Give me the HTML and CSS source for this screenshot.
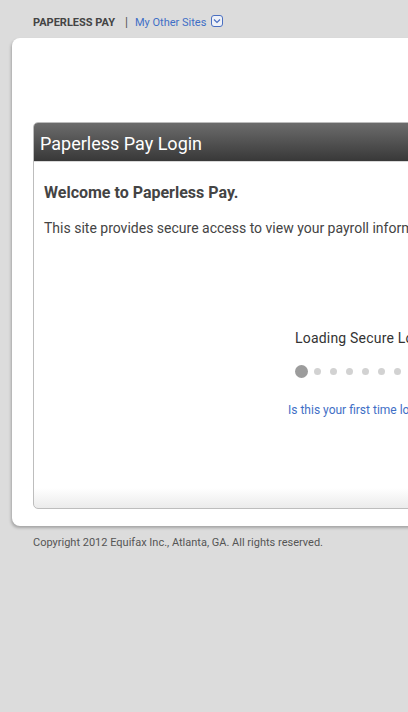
FILE: index.html
```html
<!DOCTYPE html>
<html>
<head>
<meta charset="utf-8">
<link rel="stylesheet" href="styles.css">
</head>
<body>
<div class="page">
  <div class="topbar">
    <span class="brand">PAPERLESS PAY</span>
    <span class="sep">|</span>
    <a class="sites" href="#">My Other Sites</a>
    <svg class="ddicon" width="12" height="12" viewBox="0 0 12 12">
      <rect x="0.5" y="0.5" width="11" height="11" rx="2.5" fill="#eef1f8" stroke="#4a6fc0"/>
      <path d="M3 4.5 L6 7.5 L9 4.5" fill="none" stroke="#4a6fc0" stroke-width="1.2"/>
    </svg>
  </div>
  <div class="card">
    <div class="panel">
      <div class="panel-head">Paperless Pay Login</div>
      <div class="panel-body">
        <h1 class="welcome">Welcome to Paperless Pay.</h1>
        <p class="intro">This site provides secure access to view your payroll information online.</p>
        <div class="loading">
          <div class="loading-text">Loading Secure Login...</div>
          <div class="dots">
            <span class="dot big"></span>
            <span class="dot"></span>
            <span class="dot"></span>
            <span class="dot"></span>
            <span class="dot"></span>
            <span class="dot"></span>
            <span class="dot"></span>
            <span class="dot"></span>
          </div>
          <a class="first" href="#">Is this your first time logging in?</a>
        </div>
      </div>
    </div>
  </div>
  <div class="copyright">Copyright 2012 Equifax Inc., Atlanta, GA. All rights reserved.</div>
</div>
</body>
</html>
```
FILE: styles.css
```css
html, body {
  margin: 0;
  padding: 0;
  background: #dcdcdc;
  font-family: Roboto, "Liberation Sans", Arial, sans-serif;
}
.page {
  width: 712px;
  padding: 0 0 0 12px;
}
.topbar {
  display: flex;
  align-items: center;
  height: 38px;
  padding: 6px 0 0 21px;
  font-size: 11px;
  box-sizing: border-box;
}
.brand {
  font-weight: bold;
  color: #444;
}
.sep {
  color: #555;
  margin: 0 7px 0 10px;
  font-size: 12px;
}
.sites {
  color: #3f6fc6;
  text-decoration: none;
  font-size: 11px;
}
.ddicon {
  margin-left: 5px;
  margin-top: -2px;
}
.card {
  background: #fff;
  border-radius: 8px;
  padding: 84px 21px 17px 21px;
  box-shadow: -1px 2px 3px rgba(0,0,0,0.25);
}
.panel {
  border: 1px solid #bdbdbd;
  border-radius: 5px;
  overflow: hidden;
  background: linear-gradient(to bottom, #fff 0, #fff 365px, #ebebeb 100%);
}
.panel-head {
  height: 38px;
  line-height: 41px;
  padding-left: 6px;
  color: #fff;
  font-size: 18px;
  background: linear-gradient(to bottom, #6c6c6c, #383838);
  border-bottom: 1px solid #d8d8d8;
}
.panel-body {
  padding: 21px 10px 0 10px;
  height: 346px;
  box-sizing: border-box;
}
.welcome {
  margin: 0;
  font-size: 16px;
  font-weight: bold;
  color: #444;
  line-height: 20px;
}
.intro {
  margin: 15px 0 0 0;
  font-size: 14px;
  color: #444;
  line-height: 20px;
  white-space: nowrap;
}
.loading {
  margin: 90px 0 0 244px;
  display: flex;
  flex-direction: column;
  align-items: flex-start;
}
.loading-text {
  font-size: 14px;
  color: #333;
  line-height: 20px;
  margin-left: 7px;
  letter-spacing: 0.2px;
}
.dots {
  display: flex;
  align-items: center;
  gap: 9px;
  margin: 17px 0 0 7px;
}
.dot {
  width: 7px;
  height: 7px;
  border-radius: 50%;
  background: #d2d2d2;
}
.dot.big {
  width: 13px;
  height: 13px;
  background: #9c9c9c;
  margin-right: -3px;
}
.first {
  margin-top: 25px;
  font-size: 12px;
  color: #3f6fc6;
  text-decoration: none;
}
.copyright {
  padding: 10px 0 0 21px;
  font-size: 11px;
  color: #555;
}
```
